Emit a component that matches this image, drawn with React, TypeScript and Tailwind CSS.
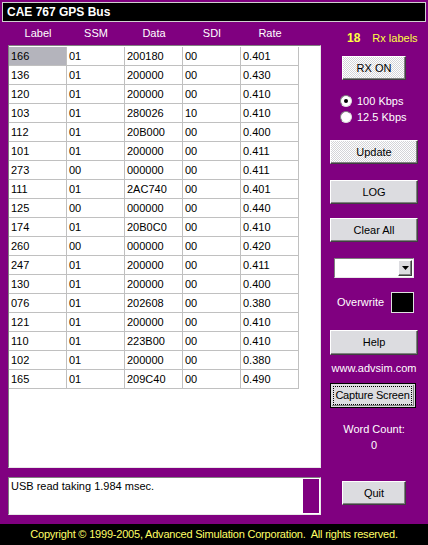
import React from "react";

const rows: [string, string, string, string, string][] = [
  ["166", "01", "200180", "00", "0.401"],
  ["136", "01", "200000", "00", "0.430"],
  ["120", "01", "200000", "00", "0.410"],
  ["103", "01", "280026", "10", "0.410"],
  ["112", "01", "20B000", "00", "0.400"],
  ["101", "01", "200000", "00", "0.411"],
  ["273", "00", "000000", "00", "0.411"],
  ["111", "01", "2AC740", "00", "0.401"],
  ["125", "00", "000000", "00", "0.440"],
  ["174", "01", "20B0C0", "00", "0.410"],
  ["260", "00", "000000", "00", "0.420"],
  ["247", "01", "200000", "00", "0.411"],
  ["130", "01", "200000", "00", "0.400"],
  ["076", "01", "202608", "00", "0.380"],
  ["121", "01", "200000", "00", "0.410"],
  ["110", "01", "223B00", "00", "0.410"],
  ["102", "01", "200000", "00", "0.380"],
  ["165", "01", "209C40", "00", "0.490"],
];

const headers = ["Label", "SSM", "Data", "SDI", "Rate"];

const btnCls =
  "flex items-center justify-center bg-[#dcdce0] text-black border border-t-white border-l-white border-b-[#404040] border-r-[#404040] shadow-[inset_-1px_-1px_0_#808080]";
const ditherCls =
  "bg-[repeating-conic-gradient(#ffffff_0_25%,#d4d4d8_0_50%)] bg-[length:2px_2px]";

function Radio({ checked, label }: { checked?: boolean; label: string }) {
  return (
    <div className="flex items-center h-[16px] ml-[10px]">
      <div className="w-[12px] h-[12px] rounded-full bg-white border border-t-[#808080] border-l-[#808080] border-b-[#e0e0e0] border-r-[#e0e0e0] flex items-center justify-center">
        {checked && <div className="w-[4px] h-[4px] rounded-full bg-black" />}
      </div>
      <span className="ml-[5px] text-white">{label}</span>
    </div>
  );
}

export default function App() {
  return (
    <div
      className="w-[428px] h-[545px] bg-[#800080] flex flex-col text-[11px] leading-none overflow-hidden"
      style={{ fontFamily: '"Liberation Sans", Arial, sans-serif' }}
    >
      {/* Title bar */}
      <div className="mx-[2px] mt-[2px] h-[20px] bg-black border border-[#d0d0d0] flex items-center pl-[4px]">
        <span className="text-white font-bold text-[12px]">CAE 767 GPS Bus</span>
      </div>

      <div className="flex flex-1">
        {/* Left column */}
        <div className="ml-[8px] w-[313px] flex flex-col">
          <div className="h-[23px] flex items-center pl-[1px]">
            {headers.map((h) => (
              <div key={h} className="w-[58px] text-center text-white">
                {h}
              </div>
            ))}
          </div>

          <div className="h-[423px] bg-white border border-t-[#808080] border-l-[#808080] border-b-[#e8e8e8] border-r-[#e8e8e8] pt-[1px]">
            {rows.map((r, i) => (
              <div key={i} className="flex">
                {r.map((c, j) => (
                  <div
                    key={j}
                    className={`w-[58px] h-[19px] flex items-center pl-[2px] border-r border-b border-[#c0c0c0] text-black ${
                      i === 0 && j === 0 ? "bg-[#b4b4bc]" : ""
                    }`}
                  >
                    {c}
                  </div>
                ))}
              </div>
            ))}
          </div>

          <div className="mt-[9px] h-[38px] bg-white border border-t-[#808080] border-l-[#808080] border-b-[#e8e8e8] border-r-[#e8e8e8] flex">
            <div className="flex-1 pl-[2px] pt-[3px] text-black">USB read taking 1.984 msec.</div>
            <div className="w-[16px] my-[1px] mr-[1px] bg-[#800080]" />
          </div>
        </div>

        {/* Right column */}
        <div className="ml-[9px] w-[88px] flex flex-col">
          <div className="mt-[10px] h-[12px] flex items-center text-[#ffff40]">
            <span className="ml-[17px] font-bold text-[12px]">18</span>
            <span className="ml-[12px]">Rx labels</span>
          </div>

          <div className={`${btnCls} ${ditherCls} mt-[12px] ml-[12px] w-[64px] h-[24px]`}>RX ON</div>

          <div className="mt-[13px] flex flex-col">
            <Radio checked label="100 Kbps" />
            <Radio label="12.5 Kbps" />
          </div>

          <div className={`${btnCls} ${ditherCls} mt-[15px] w-[88px] h-[24px]`}>Update</div>
          <div className={`${btnCls} mt-[16px] w-[88px] h-[24px]`}>LOG</div>
          <div className={`${btnCls} mt-[14px] w-[88px] h-[24px]`}>Clear All</div>

          <div className="mt-[16px] ml-[4px] w-[80px] h-[20px] bg-white border border-t-[#808080] border-l-[#808080] border-b-[#e8e8e8] border-r-[#e8e8e8] flex justify-end p-[1px]">
            <div className={`${btnCls} w-[14px] h-full`}>
              <svg width="7" height="4" viewBox="0 0 7 4">
                <path d="M0 0h7L3.5 4z" fill="black" />
              </svg>
            </div>
          </div>

          <div className="mt-[14px] flex items-center">
            <span className="ml-[7px] text-white">Overwrite</span>
            <div className="ml-[7px] w-[23px] h-[21px] bg-black border border-[#e0e0e0]" />
          </div>

          <div className={`${btnCls} mt-[17px] w-[88px] h-[25px]`}>Help</div>

          <div className="mt-[8px] text-center text-white">www.advsim.com</div>

          <div className="mt-[9px] w-[86px] h-[25px] border border-black bg-[#dcdce0] p-[1px]">
            <div className="w-full h-full border-r border-b border-[#808080] flex items-center justify-center">
              <span className="border border-dotted border-black px-[1px] py-[3px] text-black whitespace-nowrap tracking-[-0.2px]">
                Capture Screen
              </span>
            </div>
          </div>

          <div className="mt-[16px] text-center text-white">Word Count:</div>
          <div className="mt-[5px] text-center text-white">0</div>

          <div className={`${btnCls} mt-[30px] ml-[12px] w-[64px] h-[24px]`}>Quit</div>
        </div>
      </div>

      {/* Footer */}
      <div className="h-[21px] bg-black flex items-center justify-center text-[#ffff66] whitespace-pre tracking-[-0.2px]">
        Copyright © 1999-2005, Advanced Simulation Corporation.  All rights reserved.
      </div>
    </div>
  );
}
